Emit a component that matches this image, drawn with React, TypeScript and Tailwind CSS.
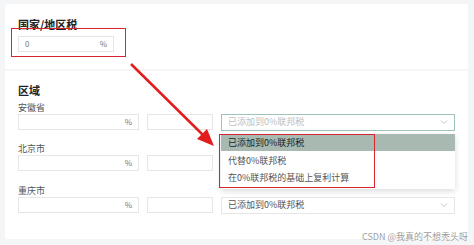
import React from "react";

const font = { fontFamily: '"Noto Sans CJK SC", "Noto Sans", sans-serif' };

function Chevron() {
  return (
    <svg width="8" height="6" viewBox="0 0 8 6" className="shrink-0">
      <path d="M1 1.5 L4 4.5 L7 1.5" fill="none" stroke="#c4c4c4" strokeWidth="1" />
    </svg>
  );
}

function Row({ label, value, focused }: { label: string; value?: string; focused?: boolean }) {
  return (
    <div className="flex flex-col">
      <div className="text-[9px] leading-[12px] text-[#555] h-[12px]">{label}</div>
      <div className="flex items-center h-[16px]">
        <div className="w-[121px] h-[16px] border border-[#e6e6e6] bg-white flex items-center justify-end pr-[6px] text-[8px] text-[#777]">%</div>
        <div className="ml-[8px] w-[66px] h-[16px] border border-[#e6e6e6] bg-white" />
        <div
          className={
            "ml-[8px] w-[234px] h-[17px] border bg-white flex items-center justify-between pl-[6px] pr-[6px] text-[9px] " +
            (focused ? "border-[#9ec4b8] text-[#c0c0c0]" : "border-[#e6e6e6] text-[#555]")
          }
        >
          <span>{value}</span>
          <Chevron />
        </div>
      </div>
    </div>
  );
}

export default function App() {
  return (
    <div className="relative w-[474px] h-[245px] bg-[#f4f5f7] overflow-hidden" style={font}>
      <div className="flex flex-col pt-[4px] pl-[5px] pr-[6px]">
        <div className="bg-white rounded-t-[3px] h-[65px] pl-[13px] pt-[13px]">
          <div className="text-[11px] leading-[14px] font-bold text-[#222]">国家/地区税</div>
          <div className="mt-[5px] w-[96px] h-[16px] border border-[#e6e6e6] flex items-center justify-between pl-[6px] pr-[6px] text-[8px] text-[#777]">
            <span>0</span>
            <span>%</span>
          </div>
        </div>
        <div className="mt-[2px] bg-white rounded-b-[3px] h-[168px] pl-[13px] pt-[12px] flex flex-col">
          <div className="text-[11px] leading-[14px] font-bold text-[#222]">区域</div>
          <div className="mt-[5px] flex flex-col gap-[13px]">
            <Row label="安徽省" value="已添加到0%联邦税" focused />
            <Row label="北京市" />
            <div className="mt-[1px]">
              <Row label="重庆市" value="已添加到0%联邦税" />
            </div>
          </div>
        </div>
      </div>

      {/* dropdown */}
      <div className="absolute left-[221px] top-[134px] w-[234px] h-[55px] bg-white shadow-[0_2px_6px_rgba(0,0,0,0.15)] flex flex-col text-[9px] text-[#555]">
        <div className="h-[17px] bg-[#a8b9b1] text-[#222] flex items-center pl-[7px]">已添加到0%联邦税</div>
        <div className="h-[17px] flex items-center pl-[7px] mt-[1px]">代替0%联邦税</div>
        <div className="h-[17px] flex items-center pl-[7px]">在0%联邦税的基础上复利计算</div>
      </div>

      {/* red boxes */}
      <div className="absolute left-[11px] top-[28px] w-[115px] h-[29px] border-[1.5px] border-[#d8242f]" />
      <div className="absolute left-[219px] top-[134px] w-[156px] h-[54px] border-[1.5px] border-[#d8242f]" />

      {/* arrow */}
      <svg className="absolute left-0 top-0" width="474" height="245" viewBox="0 0 474 245">
        <line x1="131" y1="64" x2="204" y2="136" stroke="#e21d1d" strokeWidth="2.5" />
        <polygon points="214,146 197,139 207,129" fill="#e21d1d" />
      </svg>

      <div className="absolute right-[6px] top-[231px] text-[9px] leading-[12px] text-[#a0a0a0]">CSDN @我真的不想秃头呀</div>
    </div>
  );
}
